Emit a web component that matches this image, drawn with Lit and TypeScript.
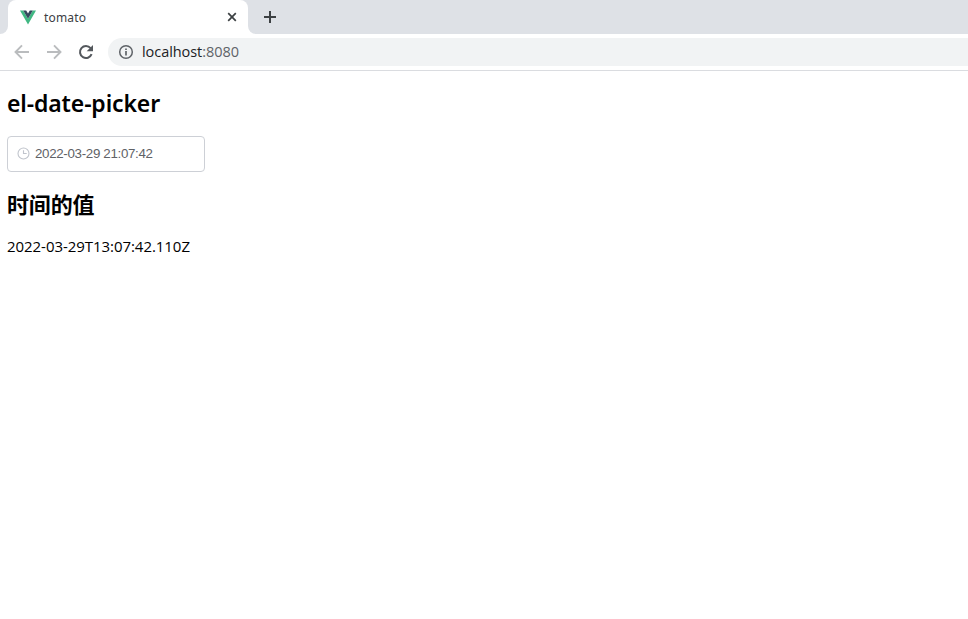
import { LitElement, html, css } from "lit";
import { customElement, property, state } from "lit/decorators.js";

@customElement("browser-chrome")
class BrowserChrome extends LitElement {
  @property() title = "";
  @property() host = "";
  @property() port = "";

  static styles = css`
    :host { display: block; font-family: "Noto Sans", "Open Sans", sans-serif; }
    svg { display: block; flex: none; }
    .strip { display: flex; height: 34px; }
    .edge { width: 8px; background: #dee1e6; border-radius: 0 0 8px 0; }
    .tabwrap { width: 240px; background: linear-gradient(#dee1e6 50%, #fff 50%); }
    .tab { box-sizing: border-box; height: 34px; display: flex; align-items: center; padding: 0 10px 0 12px; background: #fff; border-radius: 8px 8px 0 0; }
    .name { flex: 1; margin-left: 8px; font-size: 12px; line-height: 34px; color: #3c4043; letter-spacing: 0.15px; padding-top: 1px; }
    .rest { flex: 1; display: flex; align-items: center; padding-left: 14px; background: #dee1e6; border-radius: 0 0 0 8px; }
    .toolbar { box-sizing: border-box; height: 37px; display: flex; align-items: center; gap: 16px; padding-left: 14px; border-bottom: 1px solid #dadce0; background: #fff; }
    .address { flex: 1; height: 28px; display: flex; align-items: center; gap: 8px; padding-left: 10px; margin-left: -2px; background: #f1f3f4; border-radius: 14px 0 0 14px; }
    .url { font-family: "Open Sans", sans-serif; font-size: 14.5px; line-height: 28px; color: #202124; letter-spacing: -0.06px; }
    .port { color: #5f6368; }
  `;

  render() {
    return html`
      <div class="strip">
        <div class="edge"></div>
        <div class="tabwrap">
          <div class="tab">
            <svg width="16" height="16" viewBox="0 0 16 16">
              <path d="M0 1.5h3.2L8 9.8l4.8-8.3H16L8 15.4z" fill="#41b883" />
              <path d="M3.2 1.5h3L8 4.6l1.8-3.1h3L8 9.8z" fill="#35495e" />
            </svg>
            <span class="name">${this.title}</span>
            <svg width="12" height="12" viewBox="0 0 12 12">
              <path d="M2.2 2.2l7.6 7.6M9.8 2.2l-7.6 7.6" stroke="#3c4043" stroke-width="1.7" />
            </svg>
          </div>
        </div>
        <div class="rest">
          <svg width="16" height="16" viewBox="0 0 16 16">
            <path d="M2 8h12M8 2v12" stroke="#3c4043" stroke-width="2" />
          </svg>
        </div>
      </div>
      <div class="toolbar">
        <svg width="16" height="16" viewBox="0 0 16 16" fill="none" stroke="#babcbe" stroke-width="1.9">
          <path d="M15 8H2.3M8 1.4L1.5 8 8 14.6" />
        </svg>
        <svg width="16" height="16" viewBox="0 0 16 16" fill="none" stroke="#babcbe" stroke-width="1.9">
          <path d="M1 8h12.7M8 1.4L14.5 8 8 14.6" />
        </svg>
        <svg width="16" height="16" viewBox="0 0 16 16">
          <path d="M13.6 10.2A6 6 0 1 1 12.6 4.2" fill="none" stroke="#54585d" stroke-width="2" />
          <path d="M15 1v6.3H8.7z" fill="#54585d" />
        </svg>
        <div class="address">
          <svg width="16" height="16" viewBox="0 0 16 16">
            <circle cx="8" cy="8" r="6.3" fill="none" stroke="#5f6368" stroke-width="1.5" />
            <path d="M8 7.1v4.3M8 4.4v1.6" stroke="#5f6368" stroke-width="1.7" />
          </svg>
          <span class="url">${this.host}<span class="port">:${this.port}</span></span>
        </div>
      </div>
    `;
  }
}

@customElement("date-field")
class DateField extends LitElement {
  @property() value = "";

  static styles = css`
    :host { box-sizing: border-box; display: flex; align-items: center; gap: 5px; width: 198px; height: 36px; padding-left: 9px; border: 1px solid #cdd0d6; border-radius: 4px; background: #fff; }
    .value { font: 13.33px/34px "Liberation Sans", Arial, sans-serif; color: #606266; letter-spacing: -0.32px; white-space: nowrap; }
    .clock { display: block; flex: none; margin-top: -2px; }
  `;

  render() {
    return html`
      <svg class="clock" width="13" height="13" viewBox="0 0 13 13" fill="none" stroke="#c0c4cc" stroke-width="1.1">
        <circle cx="6.5" cy="6.5" r="5.5" />
        <path d="M6.5 3.2v3.3h3.2" />
      </svg>
      <span class="value">${this.value}</span>
    `;
  }
}

@customElement("app-root")
class AppRoot extends LitElement {
  @state() private shown = "2022-03-29 21:07:42";
  @state() private iso = "2022-03-29T13:07:42.110Z";

  static styles = css`
    :host { display: block; height: 619px; overflow: hidden; background: #fff; color: #000; }
    .page { padding: 16px 0 0 7px; }
    .heading { margin: 0; height: 32px; line-height: 32px; font-family: "Noto Sans", "Noto Sans CJK SC", sans-serif; font-weight: 600; font-size: 23px; letter-spacing: -0.12px; white-space: nowrap; }
    .picker { margin: 17px 0 15px; }
    .cjk { font-family: "Noto Sans CJK SC", sans-serif; font-weight: 700; font-size: 22px; letter-spacing: -0.15px; }
    .iso { margin-top: 16px; font: 15px/22px "Open Sans", sans-serif; letter-spacing: -0.05px; white-space: nowrap; }
  `;

  render() {
    return html`
      <browser-chrome title="tomato" host="localhost" port="8080"></browser-chrome>
      <main class="page">
        <h2 class="heading">el-date-picker</h2>
        <date-field class="picker" .value=${this.shown}></date-field>
        <h2 class="heading cjk">时间的值</h2>
        <div class="iso">${this.iso}</div>
      </main>
    `;
  }
}
